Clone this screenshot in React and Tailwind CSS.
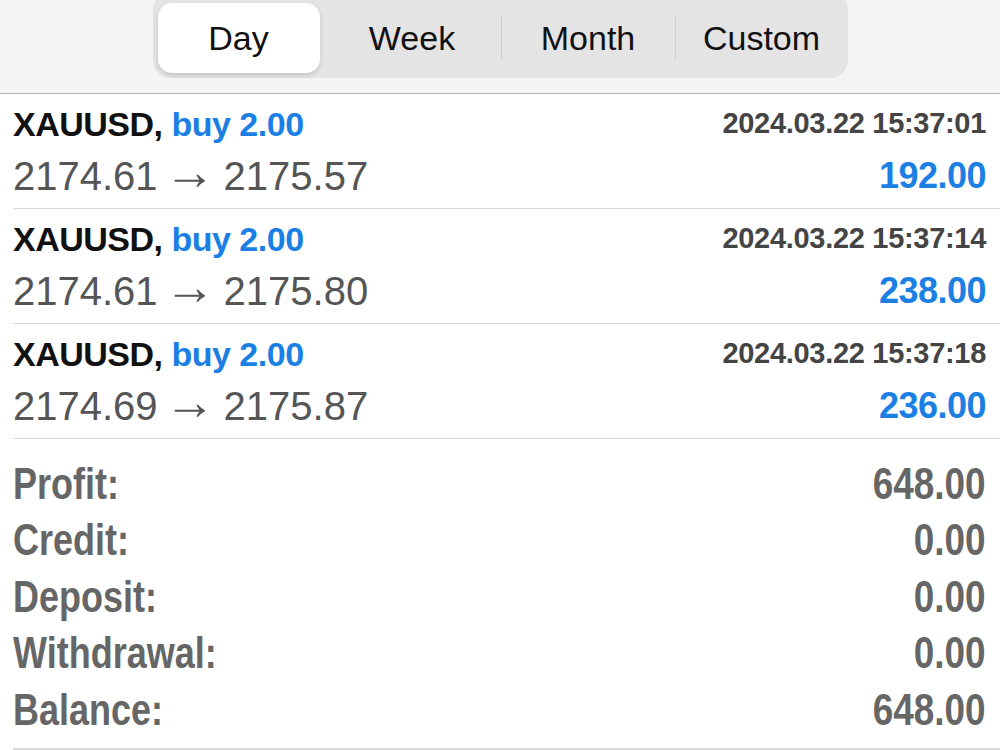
import React from "react";

const trades = [
  { open: "2174.61", close: "2175.57", time: "2024.03.22 15:37:01", profit: "192.00" },
  { open: "2174.61", close: "2175.80", time: "2024.03.22 15:37:14", profit: "238.00" },
  { open: "2174.69", close: "2175.87", time: "2024.03.22 15:37:18", profit: "236.00" },
];

const summary = [
  ["Profit:", "648.00"],
  ["Credit:", "0.00"],
  ["Deposit:", "0.00"],
  ["Withdrawal:", "0.00"],
  ["Balance:", "648.00"],
];

export default function App() {
  return (
    <div className="w-[1000px] h-[750px] overflow-hidden bg-white font-['Liberation_Sans',Arial,sans-serif]">
      {/* period tabs */}
      <div className="h-[94px] bg-[#f4f4f4] border-b border-[#b4b4b4] flex justify-center">
        <div className="w-[695px] h-[86px] -mt-[8px] bg-[#e4e4e4] rounded-[18px] flex items-center pt-[6px] pl-[5px] text-[34px] text-[#111]">
          <div className="w-[162px] h-[70px] flex items-center justify-center bg-white rounded-[14px] shadow-[0_2px_4px_rgba(0,0,0,0.15)]">
            Day
          </div>
          <div className="w-[181px] h-[70px] flex items-center justify-center pl-[4px]">Week</div>
          <div className="w-px h-[44px] bg-[#cfcfcf]" />
          <div className="w-[173px] h-[70px] flex items-center justify-center">Month</div>
          <div className="w-px h-[44px] bg-[#cfcfcf]" />
          <div className="w-[172px] h-[70px] flex items-center justify-center">Custom</div>
        </div>
      </div>

      {/* trades */}
      {trades.map((tr, i) => (
        <div key={i} className="pl-[13px]">
          <div className="h-[114px] pr-[14px] flex flex-col">
            <div className="flex items-center justify-between h-[58px] pt-[2px]">
              <div className="text-[34px] font-bold tracking-[-0.5px]">
                <span className="text-[#111]">XAUUSD, </span>
                <span className="text-[#1b7fe3]">buy 2.00</span>
              </div>
              <div className="text-[29px] font-bold text-[#444] tracking-[-0.3px]">{tr.time}</div>
            </div>
            <div className="flex items-center justify-between h-[48px]">
              <div className="flex items-center text-[40px] text-[#555] leading-none">
                <span>{tr.open}</span>
                <span className="ml-[7px] mr-[8px] text-[51px] leading-none -mt-[10px]">→</span>
                <span>{tr.close}</span>
              </div>
              <div className="text-[36px] font-bold text-[#1b7fe3] tracking-[-0.5px]">{tr.profit}</div>
            </div>
          </div>
          <div className="h-px bg-[#d9d9d9]" />
        </div>
      ))}

      {/* summary */}
      <div className="pl-[13px]">
        <div className="pr-[14px] pt-[16px] pb-[10px] font-bold text-[#666] text-[45px]">
          {summary.map(([k, v]) => (
            <div key={k} className="h-[56.5px] flex items-center justify-between leading-none">
              <span className="inline-block origin-left scale-x-[0.8]">{k}</span>
              <span className="inline-block origin-right scale-x-[0.82]">{v}</span>
            </div>
          ))}
        </div>
        <div className="h-[2px] bg-[#dcdcdc]" />
      </div>
    </div>
  );
}
